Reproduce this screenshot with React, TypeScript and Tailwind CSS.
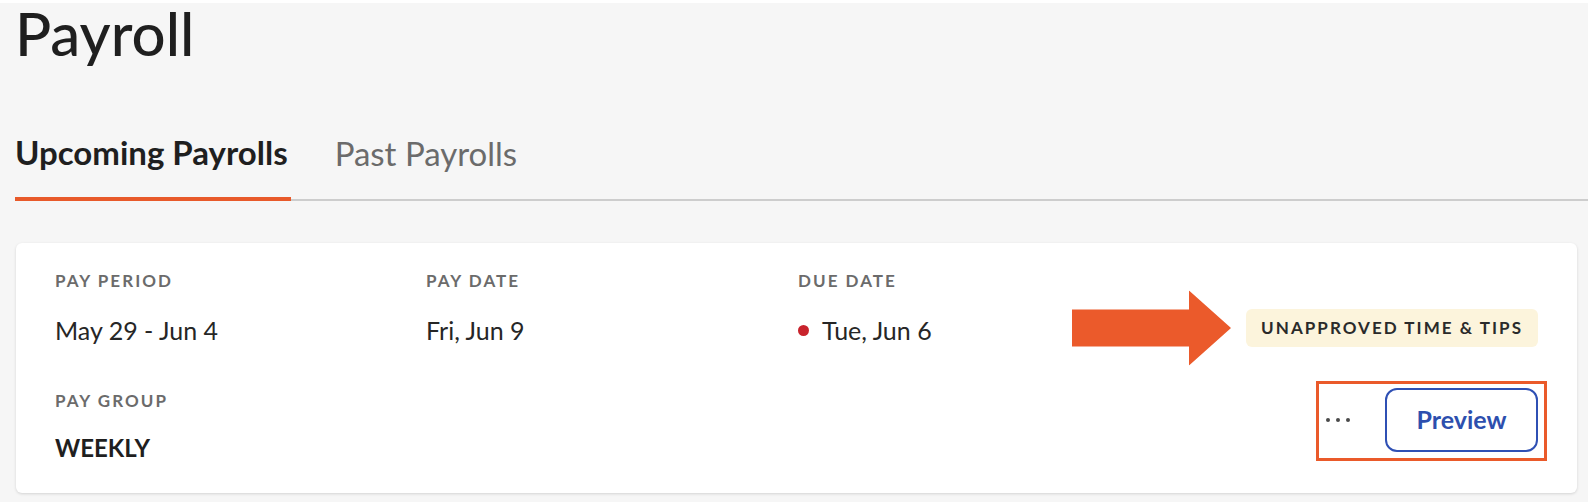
export default function App() {
  return (
    <div className="min-h-screen bg-[#f6f6f6] font-['Lato','Liberation_Sans',sans-serif] text-[#222]">
      <h1 className="ml-[15px] mt-[3px] text-[60px] leading-[60px] font-medium text-[#1f1f1f]">Payroll</h1>

      <div className="ml-[15px] mt-[69px] flex gap-[44px] border-b-2 border-[#cdcdcd]">
        <button className="-mb-[2px] border-b-4 border-[#e85a2a] pb-[25px] pr-[3px] text-[33px] leading-[40px] font-bold text-[#1f1f1f]">
          Upcoming Payrolls
        </button>
        <button className="pb-[25px] text-[33px] leading-[40px] font-normal text-[#6b6b6b]">Past Payrolls</button>
      </div>

      <section className="ml-[16px] mr-[11px] mt-[42px] flex rounded-[6px] bg-white px-[39px] pb-[30px] pt-[28px] shadow-[0_1px_3px_rgba(0,0,0,0.14)]">
        <div className="grid flex-1 grid-cols-[371px_372px_1fr]">
          <Field label="PAY PERIOD" value="May 29 - Jun 4" />
          <Field label="PAY DATE" value="Fri, Jun 9" />
          <div>
            <Label>DUE DATE</Label>
            <div className="mt-[24px] flex items-center gap-[13px] text-[25px] leading-[30px] text-[#262626]">
              <span className="h-[11px] w-[11px] rounded-full bg-[#c8232c]" />
              Tue, Jun 6
            </div>
          </div>
          <div className="col-span-3 mt-[46px]">
            <Label>PAY GROUP</Label>
            <div className="mt-[22px] text-[24px] leading-[30px] font-bold text-[#1f1f1f]">WEEKLY</div>
          </div>
        </div>

        <div className="mt-[38px] flex flex-col items-end">
          <div className="relative">
            <svg
              className="pointer-events-none absolute right-full top-1/2 mr-[15px] -translate-y-1/2"
              width="159"
              height="75"
              viewBox="0 0 159 75"
            >
              <polygon points="0,19 117,19 117,0 159,37.5 117,75 117,56 0,56" fill="#eb5a2b" />
            </svg>
            <span className="flex h-[38px] items-center rounded-[6px] bg-[#fcf4dc] px-[15px] text-[17px] font-bold tracking-[0.12em] text-[#2a2a2a]">
              UNAPPROVED TIME &amp; TIPS
            </span>
          </div>

          <div className="relative mt-[41px] flex items-center gap-[35px]">
            <span className="pointer-events-none absolute -bottom-[9px] -left-[10px] -right-[9px] -top-[7px] border-[3px] border-[#ea5a2a]" />
            <span className="flex gap-[6px]">
              <span className="h-[4px] w-[4px] rounded-full bg-[#4a4a4a]" />
              <span className="h-[4px] w-[4px] rounded-full bg-[#4a4a4a]" />
              <span className="h-[4px] w-[4px] rounded-full bg-[#4a4a4a]" />
            </span>
            <button className="h-[64px] w-[153px] rounded-[12px] border-[2.5px] border-[#2f50b4] text-[25px] font-bold text-[#2d4fae]">
              Preview
            </button>
          </div>
        </div>
      </section>
    </div>
  )
}

function Label({ children }: { children: React.ReactNode }) {
  return <div className="text-[17px] leading-[20px] font-bold tracking-[0.12em] text-[#6b6b6b]">{children}</div>
}

function Field({ label, value }: { label: string; value: string }) {
  return (
    <div>
      <Label>{label}</Label>
      <div className="mt-[24px] text-[25px] leading-[30px] text-[#262626]">{value}</div>
    </div>
  )
}
